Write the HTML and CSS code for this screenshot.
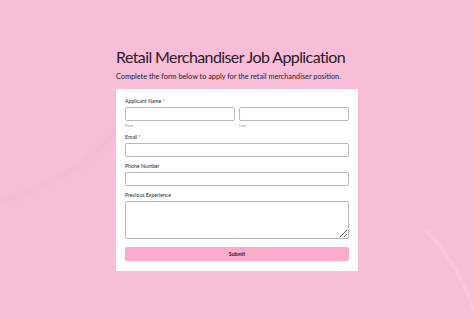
FILE: index.html
```html
<!DOCTYPE html>
<html lang="en">
<head>
    <meta charset="UTF-8">
    <meta name="viewport" content="width=device-width, initial-scale=1.0">
    <title>Retail Merchandiser Job Application</title>
    <link rel="stylesheet" href="styles.css">
</head>
<body>

    <div class="page">
        <h1>Retail Merchandiser Job Application</h1>
        <p class="intro">Complete the form below to apply for the retail merchandiser position.</p>

        <form class="card">
            <div class="field">
                <label>Applicant Name <span class="req">*</span></label>
                <div class="name-row">
                    <div class="sub">
                        <input type="text">
                        <span class="hint">First</span>
                    </div>
                    <div class="sub">
                        <input type="text">
                        <span class="hint">Last</span>
                    </div>
                </div>
            </div>

            <div class="field">
                <label>Email <span class="req">*</span></label>
                <input type="email">
            </div>

            <div class="field">
                <label>Phone Number</label>
                <input type="tel">
            </div>

            <div class="field">
                <label>Previous Experience</label>
                <textarea></textarea>
            </div>

            <button type="button" class="submit">Submit</button>
        </form>
    </div>

</body>
</html>
```

FILE: styles.css
```css
body {
    font-family: Lato, "Open Sans", sans-serif;
    background-color: #f8bed8;
    /* faint arcs in the backdrop (left one, bottom-right one) */
    background-image:
        radial-gradient(circle at -55px -125px, rgba(236, 172, 204, 0) 228px, rgba(236, 172, 204, 0.22) 231px, rgba(236, 172, 204, 0) 240px),
        radial-gradient(circle at -170px 160px, rgba(255, 255, 255, 0) 235px, rgba(255, 255, 255, 0.16) 238px, rgba(255, 255, 255, 0) 241px);
    background-size: 116px 130px, 54px 89px;
    background-position: 0 100px, 420px 230px;
    background-repeat: no-repeat;
    margin: 0;
    height: 319px;
    overflow: hidden;
    color: #2b1b2a;
}

.page {
    width: 242px;
    margin: 0 auto;
    padding-top: 47px;
}

h1 {
    font-size: 16px;
    font-weight: 400;
    margin: 0;
    line-height: 20px;
    white-space: nowrap;
    letter-spacing: -0.6px;
}

.intro {
    font-size: 7.3px;
    margin: 5px 0 7px;
    line-height: 10px;
    white-space: nowrap;
}

.card {
    background: #fff;
    padding: 9px 9px 10px;
    display: flex;
    flex-direction: column;
    gap: 6px;
}

.field { display: flex; flex-direction: column; }

label {
    font-size: 5.2px;
    line-height: 7px;
    margin-bottom: 2px;
    color: #2b2530;
}
.req { color: #e0447d; }

.name-row { display: flex; gap: 4px; }
.sub { flex: 1; display: flex; flex-direction: column; }

.hint {
    font-size: 4px;
    line-height: 5px;
    margin-top: 2px;
    color: #8a8a8a;
}

input, textarea {
    box-sizing: border-box;
    width: 100%;
    height: 14px;
    border: 1px solid #b9b9bd;
    border-radius: 2px;
    background: #fff;
    margin: 0;
    padding: 0;
}
textarea { height: 38px; resize: vertical; }

.submit {
    margin-top: 2px;
    height: 14px;
    border: none;
    border-radius: 2px;
    background: #fdaacb;
    font-family: inherit;
    font-size: 5.2px;
    font-weight: 700;
    color: #2b1b2a;
    padding: 0;
}
```
